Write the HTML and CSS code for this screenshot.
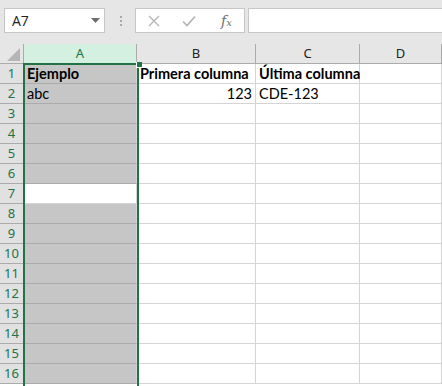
FILE: index.html
```html
<!DOCTYPE html>
<html lang="es">
<head>
    <meta http-equiv="content-type" content="text/html; charset=utf-8" />
    <title>Hoja de cálculo</title>
    <link rel="stylesheet" href="styles.css">
</head>

<body>
<div class="toolbar">
    <div class="namebox">
        <span class="name">A7</span>
        <svg class="arrow" width="9" height="5" viewBox="0 0 9 5"><path d="M0 0h9L4.5 5z" fill="#6d6d6d"/></svg>
    </div>
    <div class="dots"><i></i><i></i><i></i></div>
    <div class="fxbox">
        <svg class="btn" width="12" height="12" viewBox="0 0 12 12"><path d="M1 1l10 10M11 1L1 11" stroke="#b3b3b3" stroke-width="1.3"/></svg>
        <svg class="btn" width="14" height="12" viewBox="0 0 14 12"><path d="M1 6.5l4 4L13 1.5" stroke="#b3b3b3" stroke-width="1.6" fill="none"/></svg>
        <span class="fx">f<sub>x</sub></span>
    </div>
    <div class="formula"></div>
</div>

<div class="sheet">
    <div class="grid">
        <div class="corner"><svg width="13" height="13" viewBox="0 0 13 13"><path d="M13 0v13H0z" fill="#b5b5b5"/></svg></div>
        <div class="colhead selhead">A</div>
        <div class="colhead">B</div>
        <div class="colhead">C</div>
        <div class="colhead">D</div>

        <div class="rowhead">1</div>
        <div class="cell sel bold">Ejemplo</div>
        <div class="cell bold">Primera columna</div>
        <div class="cell bold">Última columna</div>
        <div class="cell"></div>

        <div class="rowhead">2</div>
        <div class="cell sel">abc</div>
        <div class="cell num">123</div>
        <div class="cell">CDE-123</div>
        <div class="cell"></div>

        <div class="rowhead">3</div><div class="cell sel"></div><div class="cell"></div><div class="cell"></div><div class="cell"></div>
        <div class="rowhead">4</div><div class="cell sel"></div><div class="cell"></div><div class="cell"></div><div class="cell"></div>
        <div class="rowhead">5</div><div class="cell sel"></div><div class="cell"></div><div class="cell"></div><div class="cell"></div>
        <div class="rowhead">6</div><div class="cell sel"></div><div class="cell"></div><div class="cell"></div><div class="cell"></div>
        <div class="rowhead">7</div><div class="cell active"></div><div class="cell"></div><div class="cell"></div><div class="cell"></div>
        <div class="rowhead">8</div><div class="cell sel"></div><div class="cell"></div><div class="cell"></div><div class="cell"></div>
        <div class="rowhead">9</div><div class="cell sel"></div><div class="cell"></div><div class="cell"></div><div class="cell"></div>
        <div class="rowhead">10</div><div class="cell sel"></div><div class="cell"></div><div class="cell"></div><div class="cell"></div>
        <div class="rowhead">11</div><div class="cell sel"></div><div class="cell"></div><div class="cell"></div><div class="cell"></div>
        <div class="rowhead">12</div><div class="cell sel"></div><div class="cell"></div><div class="cell"></div><div class="cell"></div>
        <div class="rowhead">13</div><div class="cell sel"></div><div class="cell"></div><div class="cell"></div><div class="cell"></div>
        <div class="rowhead">14</div><div class="cell sel"></div><div class="cell"></div><div class="cell"></div><div class="cell"></div>
        <div class="rowhead">15</div><div class="cell sel"></div><div class="cell"></div><div class="cell"></div><div class="cell"></div>
        <div class="rowhead">16</div><div class="cell sel"></div><div class="cell"></div><div class="cell"></div><div class="cell"></div>
    </div>
    <div class="selection"><span class="handle"></span></div>
</div>
</body>
</html>
```

FILE: styles.css
```css
body {
    margin: 0;
    width: 442px;
    height: 386px;
    overflow: hidden;
    background: #fff;
    font-family: "Open Sans", "Noto Sans", sans-serif;
}
.toolbar {
    display: flex;
    align-items: center;
    height: 44px;
    background: #e6e6e6;
    padding: 0 0 3px 4px;
    box-sizing: border-box;
}
.namebox {
    display: flex;
    align-items: center;
    justify-content: space-between;
    width: 101px;
    height: 25px;
    box-sizing: border-box;
    background: #fff;
    border: 1px solid #c6c6c6;
    padding: 0 4px 0 7px;
}
.name {
    font-size: 14px;
    color: #222;
}
.dots {
    display: flex;
    flex-direction: column;
    gap: 2px;
    margin: 0 13px 0 15px;
}
.dots i {
    width: 2px;
    height: 2px;
    background: #a8a8a8;
}
.fxbox {
    display: flex;
    align-items: center;
    width: 110px;
    height: 25px;
    box-sizing: border-box;
    background: #fff;
    border: 1px solid #c6c6c6;
    padding: 0 0 0 12px;
    gap: 22px;
}
.fx {
    font-family: "DejaVu Serif", serif;
    font-style: italic;
    font-size: 14px;
    color: #6f6f6f;
    margin-left: 3px;
}
.fx sub {
    font-size: 10px;
    vertical-align: 0;
}
.formula {
    flex: 1;
    height: 25px;
    box-sizing: border-box;
    margin-left: 3px;
    background: #fff;
    border: 1px solid #c6c6c6;
    border-right: none;
}
.sheet {
    position: relative;
    height: 342px;
    overflow: hidden;
}
.grid {
    display: grid;
    grid-template-columns: 24px 113px 119px 104px 82px;
    grid-template-rows: 20px;
    grid-auto-rows: 20px;
}
.grid > div {
    box-sizing: border-box;
    border-right: 1px solid #d4d4d4;
    border-bottom: 1px solid #d4d4d4;
}
.corner {
    display: flex;
    align-items: flex-end;
    justify-content: flex-end;
    padding: 0 3px 2px 0;
    background: #e6e6e6;
}
.grid > .corner, .grid > .colhead {
    border-right: 1px solid #ababab;
    border-bottom: 1px solid #ababab;
}
.colhead {
    background: #e6e6e6;
    text-align: center;
    font-family: "Noto Sans", sans-serif;
    font-size: 13px;
    line-height: 19px;
    color: #222;
}
.selhead {
    background: #d3f0e0;
    color: #217346;
}
.grid > .rowhead {
    background: #e1e1e1;
    border-right: 1px solid #ababab;
    border-bottom: 1px solid #ababab;
    text-align: center;
    font-family: "Noto Sans", sans-serif;
    font-size: 13px;
    line-height: 19px;
    color: #217346;
}
.cell {
    font-family: "Lato", sans-serif;
    font-size: 14.5px;
    line-height: 19px;
    padding: 0 3px;
    white-space: nowrap;
    color: #000;
}
.bold {
    font-weight: bold;
}
.num {
    text-align: right;
}
.grid > .sel {
    background: #c6c6c6;
    border-bottom: 1px solid #ababab;
}
.grid > .active {
    background: #fff;
}
.selection {
    position: absolute;
    left: 23px;
    top: 19px;
    width: 116px;
    height: 360px;
    box-sizing: border-box;
    border: 2px solid #217346;
}
.handle {
    position: absolute;
    right: -5px;
    top: -3px;
    width: 5px;
    height: 5px;
    background: #217346;
    border-left: 1px solid #fff;
    border-bottom: 1px solid #fff;
}
```
